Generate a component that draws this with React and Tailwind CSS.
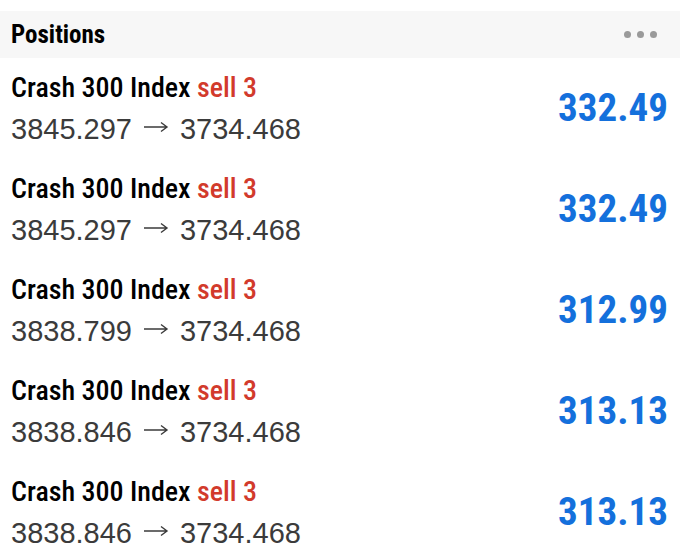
const rows = [
  { from: "3845.297", to: "3734.468", profit: "332.49" },
  { from: "3845.297", to: "3734.468", profit: "332.49" },
  { from: "3838.799", to: "3734.468", profit: "312.99" },
  { from: "3838.846", to: "3734.468", profit: "313.13" },
  { from: "3838.846", to: "3734.468", profit: "313.13" },
];

const Arrow = () => (
  <svg width="26" height="14" viewBox="0 0 26 14" className="mx-[11px] mb-[4px]" fill="none" stroke="#3b3b3b" strokeWidth="1.4">
    <path d="M1 7h23M18 2.5l6 4.5-6 4.5" />
  </svg>
);

export default function App() {
  return (
    <div className="w-[680px] h-[558px] overflow-hidden bg-white pt-[11px]">
      <div className="h-[47px] bg-[#f7f7f7] flex items-center justify-between pl-[11px] pr-[23px]">
        <span className="text-[25px] font-bold text-black font-['Roboto_Condensed',sans-serif]">Positions</span>
        <div className="flex gap-[6px]">
          <span className="w-[7px] h-[7px] rounded-full bg-[#9a9a9a]" />
          <span className="w-[7px] h-[7px] rounded-full bg-[#9a9a9a]" />
          <span className="w-[7px] h-[7px] rounded-full bg-[#9a9a9a]" />
        </div>
      </div>
      {rows.map((r, i) => (
        <div key={i} className="h-[101px] flex items-center justify-between pl-[11px] pr-[12px]">
          <div className="flex flex-col">
            <div className="text-[28px] leading-[40px] font-medium text-black font-['Roboto_Condensed',sans-serif]">
              Crash 300 Index <span className="text-[#d23a2c]">sell 3</span>
            </div>
            <div className="flex items-center text-[29px] leading-[42px] text-[#3b3b3b] font-['Liberation_Sans',sans-serif]">
              <span>{r.from}</span>
              <Arrow />
              <span>{r.to}</span>
            </div>
          </div>
          <div className="text-[39px] font-bold text-[#1470dc] font-['Roboto_Condensed',sans-serif]">{r.profit}</div>
        </div>
      ))}
    </div>
  );
}
